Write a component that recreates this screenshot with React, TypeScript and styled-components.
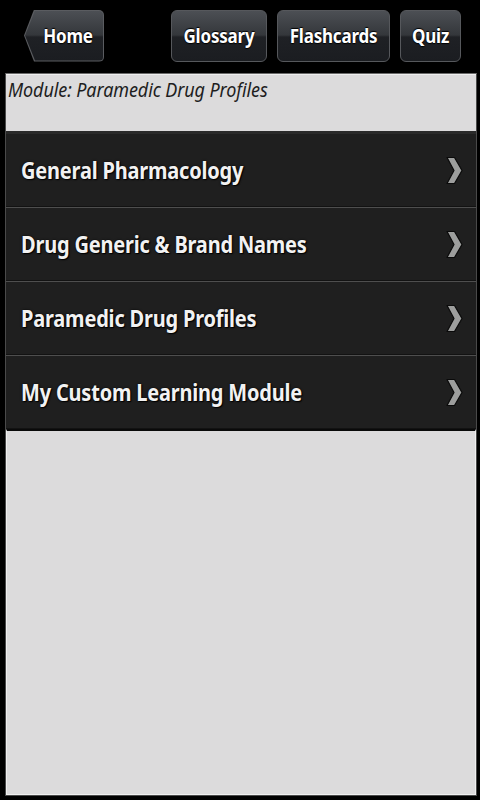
import styled, { createGlobalStyle } from "styled-components";

const GlobalStyle = createGlobalStyle`
  html, body {
    margin: 0;
    padding: 0;
    background: #000;
  }
  * {
    box-sizing: border-box;
  }
`;

const topics = [
  "General Pharmacology",
  "Drug Generic & Brand Names",
  "Paramedic Drug Profiles",
  "My Custom Learning Module",
];

const navItems = [
  { label: "Glossary", width: 96 },
  { label: "Flashcards", width: 113 },
  { label: "Quiz", width: 61 },
];

const Chevron = () => (
  <svg width="17" height="29" viewBox="0 0 17 29">
    <path
      d="M1 1.5 H8.5 L16 14.5 L8.5 27.5 H1 L8 14.5 Z"
      fill="#9d9e9d"
      stroke="#0a0a0a"
      strokeWidth="1.2"
      strokeLinejoin="round"
    />
  </svg>
);

export default function App() {
  return (
    <>
      <GlobalStyle />
      <Screen>
        <Header>
          <HomeOuter>
            <HomeInner>
              <Label>Home</Label>
            </HomeInner>
          </HomeOuter>
          <NavGroup>
            {navItems.map((n) => (
              <NavButton key={n.label} $width={n.width}>
                <Label>{n.label}</Label>
              </NavButton>
            ))}
          </NavGroup>
        </Header>

        <Panel>
          <ModuleLabel>
            <ModuleText>Module: Paramedic Drug Profiles</ModuleText>
          </ModuleLabel>
          <List>
            {topics.map((t) => (
              <Row key={t}>
                <RowText>{t}</RowText>
                <Chevron />
              </Row>
            ))}
          </List>
          <Filler />
        </Panel>
      </Screen>
    </>
  );
}

const Screen = styled.div`
  width: 480px;
  height: 800px;
  background: #000;
  display: flex;
  flex-direction: column;
  font-family: "Noto Sans", "Open Sans", sans-serif;
`;

const Header = styled.div`
  height: 73px;
  display: flex;
  align-items: center;
  justify-content: space-between;
  padding: 0 19px 2px 24px;
`;

const arrowClip = `polygon(10px 0, 100% 0, 100% 100%, 10px 100%, 0 50%)`;

const buttonGradient = `linear-gradient(
  to bottom,
  #4c4f54 0%,
  #34373b 48%,
  #1f2125 52%,
  #1b1d21 100%
)`;

const HomeOuter = styled.div`
  width: 80px;
  height: 52px;
  padding: 1px;
  background: #5a5c60;
  clip-path: ${arrowClip};
  border-radius: 0 5px 5px 0;
`;

const HomeInner = styled.div`
  width: 100%;
  height: 100%;
  clip-path: ${arrowClip};
  border-radius: 0 4px 4px 0;
  background: ${buttonGradient};
  display: flex;
  align-items: center;
  justify-content: center;
  padding-left: 8px;
`;

const Label = styled.span`
  display: inline-block;
  color: #fff;
  font-weight: 700;
  font-size: 17px;
  letter-spacing: -0.2px;
  transform: scaleY(1.12);
  text-shadow: 0 -1px 1px #000, 0 1px 1px #000;
`;

const NavGroup = styled.div`
  display: flex;
  gap: 10px;
`;

const NavButton = styled.div<{ $width: number }>`
  width: ${(p) => p.$width}px;
  height: 52px;
  border: 1px solid #56585c;
  border-radius: 6px;
  background: ${buttonGradient};
  display: flex;
  align-items: center;
  justify-content: center;
`;

const Panel = styled.div`
  flex: 1;
  margin: 0 3px 4px 5px;
  border: 1px solid #4a4a4a;
  border-top-color: #6a6a6a;
  display: flex;
  flex-direction: column;
  background: #1a1a1a;
`;

const ModuleLabel = styled.div`
  height: 59px;
  background: #dcdbdc;
  border-top: 1px solid #efefef;
  border-bottom: 2px solid #2a2a2a;
  padding: 3px 2px;
`;

const ModuleText = styled.span`
  display: inline-block;
  color: #1e1e1e;
  font-style: italic;
  font-size: 18px;
  line-height: 20px;
  letter-spacing: -0.1px;
  transform: scaleY(1.1);
  transform-origin: top left;
`;

const List = styled.div`
  display: flex;
  flex-direction: column;
`;

const Row = styled.div`
  height: 74px;
  display: flex;
  align-items: center;
  justify-content: space-between;
  padding: 0 13px 0 15px;
  background: #1f1f1f;
  border-bottom: 1px solid #121212;
  border-top: 1px solid #4e4e4e;
  &:first-child {
    border-top-color: #2a2a2a;
  }
`;

const RowText = styled.span`
  display: inline-block;
  color: #f2f2f2;
  font-weight: 700;
  font-size: 20px;
  letter-spacing: -0.2px;
  transform: scaleY(1.12);
  text-shadow: 0 0 2px #000, 1px 1px 1px #000;
`;

const Filler = styled.div`
  flex: 1;
  background: #dcdbdc;
  border-top: 2px solid #0a0a0a;
  border-bottom: 1px solid #f0f0f0;
  border-left: 1px solid #efefef;
  border-right: 1px solid #efefef;
`;
